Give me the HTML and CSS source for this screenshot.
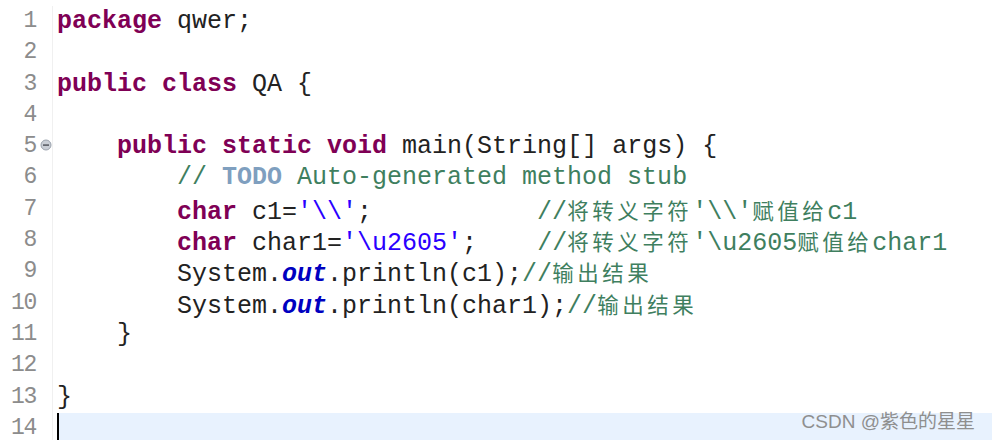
FILE: index.html
```html
<!DOCTYPE html>
<html>
<head>
<meta charset="utf-8">
<link rel="stylesheet" href="styles.css">
</head>
<body>
<div class="editor">
  <div class="gutter">
    <div class="ln">1</div>
    <div class="ln">2</div>
    <div class="ln">3</div>
    <div class="ln">4</div>
    <div class="ln fold">5<svg class="fold-icon" width="12" height="12" viewBox="0 0 12 12"><circle cx="6" cy="6" r="5" fill="#c9ced6" stroke="#9aa2ad" stroke-width="1"/><rect x="3" y="5.3" width="6" height="1.6" fill="#5a5f66"/></svg></div>
    <div class="ln">6</div>
    <div class="ln">7</div>
    <div class="ln">8</div>
    <div class="ln">9</div>
    <div class="ln">10</div>
    <div class="ln">11</div>
    <div class="ln">12</div>
    <div class="ln">13</div>
    <div class="ln">14</div>
  </div>
  <div class="code">
    <div class="line"><span class="kw">package</span> qwer;</div>
    <div class="line"> </div>
    <div class="line"><span class="kw">public</span> <span class="kw">class</span> QA {</div>
    <div class="line"> </div>
    <div class="line">    <span class="kw">public</span> <span class="kw">static</span> <span class="kw">void</span> main(String[] args) {</div>
    <div class="line">        <span class="cm">// <span class="todo">TODO</span> Auto-generated method stub</span></div>
    <div class="line">        <span class="kw">char</span> c1=<span class="str">'\\'</span>;           <span class="cm">//<span class="cjk">将转义字符</span>'\\'<span class="cjk">赋值给</span>c1</span></div>
    <div class="line">        <span class="kw">char</span> char1=<span class="str">'\u2605'</span>;    <span class="cm">//<span class="cjk">将转义字符</span>'\u2605<span class="cjk">赋值给</span>char1</span></div>
    <div class="line">        System.<span class="fld">out</span>.println(c1);<span class="cm">//<span class="cjk">输出结果</span></span></div>
    <div class="line">        System.<span class="fld">out</span>.println(char1);<span class="cm">//<span class="cjk">输出结果</span></span></div>
    <div class="line">    }</div>
    <div class="line"> </div>
    <div class="line">}</div>
    <div class="line current"><span class="caret"></span></div>
  </div>
  <div class="watermark">CSDN @紫色的星星</div>
</div>
</body>
</html>
```
FILE: styles.css
```css
html, body {
  margin: 0;
  padding: 0;
  background: #ffffff;
}

.editor {
  position: relative;
  display: flex;
  width: 992px;
  height: 440px;
  overflow: hidden;
  padding-top: 6px;
  box-sizing: border-box;
  font-family: "Liberation Mono", "Noto Sans CJK SC", monospace;
}

.gutter {
  width: 53px;
  flex: none;
  border-right: 1px solid #f0f0f0;
  box-sizing: border-box;
  margin-right: 4px;
}

.ln {
  height: 31.3px;
  line-height: 31.3px;
  font-size: 23px;
  letter-spacing: -1.3px;
  color: #8c8c8c;
  text-align: right;
  padding-right: 16px;
  position: relative;
}

.fold-icon {
  position: absolute;
  left: 40px;
  top: 8px;
}

.code {
  flex: 1;
  font-size: 25px;
  color: #222222;
}

.line {
  height: 31.3px;
  line-height: 31.3px;
  white-space: pre;
}

.current {
  background: #e8f2fe;
}

.caret {
  display: inline-block;
  width: 2px;
  height: 31px;
  background: #000;
  vertical-align: top;
}

.kw {
  color: #7f0055;
  font-weight: bold;
}

.cm {
  color: #3f7f5f;
}

.todo {
  color: #7f9fbf;
  font-weight: bold;
}

.str {
  color: #2a00ff;
}

.fld {
  color: #0000c0;
  font-weight: bold;
  font-style: italic;
}

.cjk {
  font-family: "Noto Sans CJK SC", sans-serif;
  font-size: 21.5px;
  letter-spacing: 3.5px;
}

.watermark {
  position: absolute;
  right: 17px;
  bottom: 7px;
  font-family: "Liberation Sans", "Noto Sans CJK SC", sans-serif;
  font-size: 19px;
  line-height: 22px;
  color: #8f8f8f;
}
```
